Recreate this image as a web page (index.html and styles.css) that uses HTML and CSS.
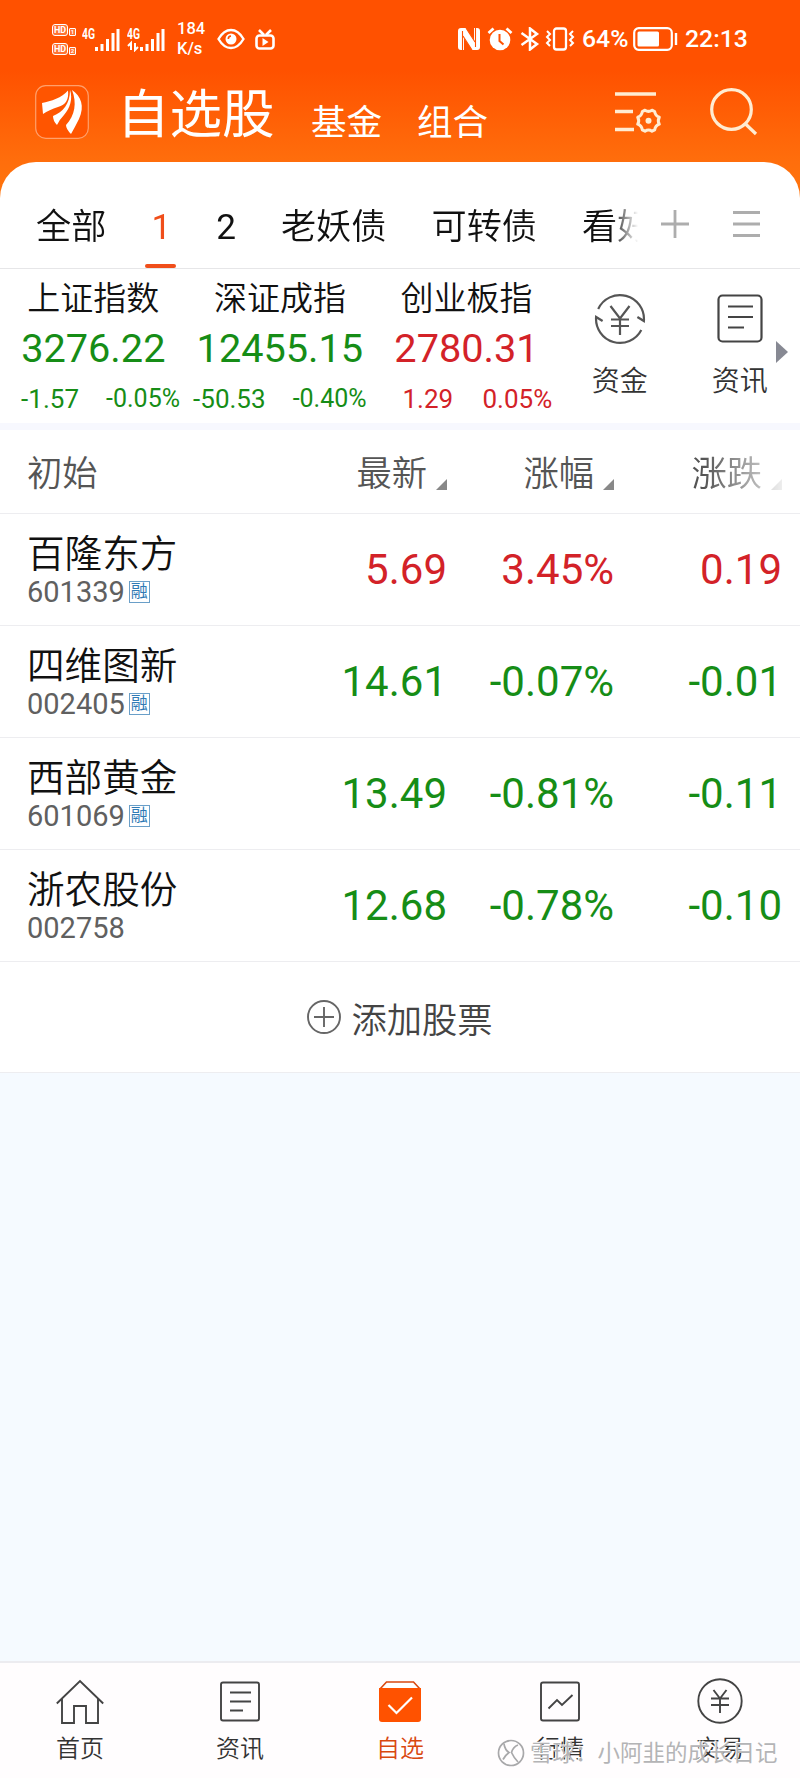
FILE: index.html
```html
<!DOCTYPE html>
<html lang="zh-CN">
<head>
    <meta charset="UTF-8">
    <meta name="viewport" content="width=device-width, initial-scale=1.0">
    <title>自选股</title>
    <link rel="stylesheet" href="styles.css">
</head>
<body>
    <div class="app">
        <header class="header">
            <div class="status-bar">
                <div class="hd-group">
                    <div class="hd"><span class="hd-label">HD</span><span class="hd-num">1</span></div>
                    <div class="hd"><span class="hd-label">HD</span><span class="hd-num">2</span></div>
                </div>
                <svg class="signal" width="38" height="26" viewBox="0 0 38 26">
                    <text x="0" y="13" class="net" textLength="13" lengthAdjust="spacingAndGlyphs">4G</text>
                    <path d="M14.5 25v-4M20 25v-7M25.5 25v-12M31 25v-18M36 25v-22" stroke="#fff" stroke-width="3"/>
                </svg>
                <svg class="signal signal-2" width="38" height="26" viewBox="0 0 38 26">
                    <text x="0" y="13" class="net" textLength="13" lengthAdjust="spacingAndGlyphs">4G</text>
                    <path d="M14.5 25v-4M20 25v-7M25.5 25v-12M31 25v-18M36 25v-22" stroke="#fff" stroke-width="3"/>
                    <path d="M4 24v-7l-3 3M8 17v7l3-3" fill="none" stroke="#fff" stroke-width="2"/>
                </svg>
                <div class="speed"><span>184</span><span>K/s</span></div>
                <svg class="eye" width="28" height="22" viewBox="0 0 28 22" fill="none" stroke="#fff" stroke-width="2.4">
                    <path d="M1.5 11C5 5 9 2 14 2s9 3 12.5 9C23 17 19 20 14 20S5 17 1.5 11z"/>
                    <circle cx="14" cy="11" r="5.5" fill="#fff" stroke="none"/>
                    <path d="M11.3 11a3 3 0 0 1 2.7-3" stroke="#ff5100" stroke-width="1.6"/>
                </svg>
                <svg class="tv" width="20" height="21" viewBox="0 0 20 21" fill="none" stroke="#fff" stroke-width="2.6">
                    <rect x="1.5" y="6.5" width="17" height="13" rx="3"/>
                    <path d="M4 1l5 5M16 1l-5 5"/>
                    <path d="M7.5 9l6 4-6 4z" fill="#fff" stroke="none"/>
                </svg>
                <svg class="nfc" width="22" height="22" viewBox="0 0 22 22">
                    <path d="M3 0h5l8 12V0h3q3 0 3 3v16q0 3-3 3h-5L6 10v12H3q-3 0-3-3V3q0-3 3-3z" fill="#fff"/>
                    <path d="M4.5 22V3M17.5 0v19M8 0l9 14M5 8l9 14" fill="none" stroke="#ff5100" stroke-width="1.1"/>
                </svg>
                <svg class="alarm" width="26" height="24" viewBox="0 0 26 24">
                    <circle cx="13" cy="13" r="10.3" fill="#fff"/>
                    <path d="M12.5 7v7l4 3.5" fill="none" stroke="#ff5100" stroke-width="2"/>
                    <path d="M1.5 6l5-4.5M24.5 6l-5-4.5" stroke="#fff" stroke-width="2.8"/>
                </svg>
                <svg class="bt" width="20" height="24" viewBox="0 0 20 24">
                    <path d="M1.5 6L17 17l-7 5.5v-21L17 7 1.5 18" fill="none" stroke="#fff" stroke-width="2.5"/>
                </svg>
                <svg class="vibrate" width="30" height="24" viewBox="0 0 30 24" fill="none" stroke="#fff" stroke-width="2.3">
                    <rect x="9" y="1.5" width="12" height="21" rx="2.5"/>
                    <path d="M2 4l3 3-3 3 3 3-3 3 3 3M28 4l-3 3 3 3-3 3 3 3-3 3" stroke-width="2"/>
                </svg>
                <span class="status-text battery-text">64%</span>
                <svg class="battery" width="46" height="24" viewBox="0 0 46 24">
                    <rect x="1.2" y="1.2" width="37.6" height="21.6" rx="4.5" fill="none" stroke="#fff" stroke-width="2.2"/>
                    <rect x="4.5" y="4.5" width="21.5" height="15" rx="1.5" fill="#fff"/>
                    <path d="M43 6v12" stroke="#fff" stroke-width="2.4"/>
                </svg>
                <span class="status-text">22:13</span>
            </div>
            <div class="title-bar">
                <svg class="logo" width="54" height="54" viewBox="0 0 54 54">
                    <rect x=".7" y=".7" width="52.6" height="52.6" rx="10" fill="#ff5500" stroke="#ffa06c" stroke-width="1.2"/>
                    <g fill="#fff">
                        <path d="M7 18C16 16 27 13 33 5.5C34 14 31 20 23 22C17 24 12 26 8 29z"/>
                        <path d="M35 5C38 14 35 23 29 30Q25 34 22 40Q18 36 18 31C28 27 35 19 35 5z"/>
                        <path d="M37 5C46 11 50 21 44 34Q40 42 36 49Q31 44 31 40C40 30 42 18 37 5z"/>
                    </g>
                </svg>
                <h1 class="title">自选股</h1>
                <span class="title-link">基金</span>
                <span class="title-link">组合</span>
                <svg class="list-settings" width="48" height="44" viewBox="0 0 48 44" fill="none" stroke="#ffecd2" stroke-width="3.4">
                    <path d="M0 4h41M0 21.5h18M0 39.500h19"/>
                    <path d="M30 20.200q3.500 2.400 7 0l2.700 1.400q.6 4.200 4.600 5.600-2 3.500 0 7-4 1.400-4.600 5.600L37 41.200q-3.500-2.400-7 0l-2.700-1.400q-.6-4.200-4.600-5.600 2-3.500 0-7 4-1.400 4.600-5.600z" stroke-width="3" stroke-linejoin="round"/>
                    <circle cx="33.5" cy="30.7" r="3" fill="#ffecd2" stroke="none"/>
                </svg>
                <svg class="search" width="48" height="48" viewBox="0 0 48 48" fill="none" stroke="#ffecd2" stroke-width="3.2">
                    <circle cx="21.5" cy="21.5" r="19.8"/>
                    <path d="M35 35.5l11 10.5"/>
                </svg>
            </div>
        </header>

        <main class="sheet">
            <nav class="tabs">
                <div class="tab-list">
                    <span class="tab">全部</span>
                    <span class="tab tab-num active">1</span>
                    <span class="tab tab-num">2</span>
                    <span class="tab">老妖债</span>
                    <span class="tab">可转债</span>
                    <span class="tab">看好</span>
                </div>
                <svg class="tab-add" width="28" height="28" viewBox="0 0 28 28">
                    <path d="M14 0v28M0 14h28" stroke="#adadad" stroke-width="2.8"/>
                </svg>
                <svg class="tab-menu" width="27" height="28" viewBox="0 0 27 28">
                    <path d="M0 2.5h27M0 14h27M0 25.5h27" stroke="#adadad" stroke-width="2.8"/>
                </svg>
            </nav>

            <section class="indices">
                <div class="index down">
                    <div class="index-name">上证指数</div>
                    <div class="index-value">3276.22</div>
                    <div class="index-change"><span>-1.57</span><span class="pct">-0.05%</span></div>
                </div>
                <div class="index down">
                    <div class="index-name">深证成指</div>
                    <div class="index-value">12455.15</div>
                    <div class="index-change"><span>-50.53</span><span class="pct">-0.40%</span></div>
                </div>
                <div class="index up">
                    <div class="index-name">创业板指</div>
                    <div class="index-value">2780.31</div>
                    <div class="index-change"><span>1.29</span><span class="pct">0.05%</span></div>
                </div>
                <div class="shortcut">
                    <svg width="52" height="52" viewBox="0 0 52 52" fill="none" stroke="#555" stroke-width="2.2">
                        <path d="M4.2 16A24 24 0 0 1 49.9 28l-6.500-4M47.300 37A24 24 0 0 1 2.100 24l6.500 4"/>
                        <path d="M16.5 13L26 25.5 35.5 13M26 25.5V42M17 26.5h18M17 33h18"/>
                    </svg>
                    <span>资金</span>
                </div>
                <div class="shortcut">
                    <svg width="46" height="52" viewBox="0 0 46 52" fill="none" stroke="#444" stroke-width="2.2">
                        <rect x="1.5" y="2.500" width="43" height="46" rx="4"/>
                        <path d="M11 13.500h25M11 24h25M11 34.500h16"/>
                    </svg>
                    <span>资讯</span>
                </div>
                <span class="more-arrow"></span>
            </section>

            <section class="stocks">
                <div class="row row-head">
                    <span>初始</span>
                    <span class="sort">最新</span>
                    <span class="sort">涨幅</span>
                    <span class="sort faded">涨跌</span>
                </div>
                <div class="row up">
                    <div class="stock">
                        <div class="stock-name">百隆东方</div>
                        <div class="stock-code">601339<span class="badge">融</span></div>
                    </div>
                    <span class="num">5.69</span><span class="num">3.45%</span><span class="num">0.19</span>
                </div>
                <div class="row down">
                    <div class="stock">
                        <div class="stock-name">四维图新</div>
                        <div class="stock-code">002405<span class="badge">融</span></div>
                    </div>
                    <span class="num">14.61</span><span class="num">-0.07%</span><span class="num">-0.01</span>
                </div>
                <div class="row down">
                    <div class="stock">
                        <div class="stock-name">西部黄金</div>
                        <div class="stock-code">601069<span class="badge">融</span></div>
                    </div>
                    <span class="num">13.49</span><span class="num">-0.81%</span><span class="num">-0.11</span>
                </div>
                <div class="row down">
                    <div class="stock">
                        <div class="stock-name">浙农股份</div>
                        <div class="stock-code">002758</div>
                    </div>
                    <span class="num">12.68</span><span class="num">-0.78%</span><span class="num">-0.10</span>
                </div>
                <div class="add-stock">
                    <svg width="34" height="34" viewBox="0 0 34 34" fill="none" stroke="#666" stroke-width="1.9">
                        <circle cx="17" cy="17" r="16"/>
                        <path d="M17 7v20M7 17h20"/>
                    </svg>
                    <span>添加股票</span>
                </div>
            </section>
        </main>

        <footer class="nav">
            <a class="nav-item">
                <svg width="48" height="48" viewBox="0 0 48 48" fill="none" stroke="#444" stroke-width="1.9">
                    <path d="M.8 25.5L24 3l23.2 22.5M6 21v24h12V28h12v17h12V21"/>
                </svg>
                <span>首页</span>
            </a>
            <a class="nav-item">
                <svg width="48" height="48" viewBox="0 0 48 48" fill="none" stroke="#444" stroke-width="1.9">
                    <rect x="5" y="4.5" width="38" height="38" rx="2"/>
                    <path d="M14 14.5h21M14 23.5h21M14 32.5h13"/>
                </svg>
                <span>资讯</span>
            </a>
            <a class="nav-item active">
                <svg width="48" height="48" viewBox="0 0 48 48">
                    <path d="M4 11l6.5-7h27l6.5 7" fill="#fff" stroke="#d9480f" stroke-width="1.6"/>
                    <path d="M3 10h42v31q0 3-3 3H6q-3 0-3-3z" fill="#ff5200"/>
                    <path d="M12.5 27l8 8L36 19.5" fill="none" stroke="#fff" stroke-width="2.2"/>
                </svg>
                <span>自选</span>
            </a>
            <a class="nav-item">
                <svg width="48" height="48" viewBox="0 0 48 48" fill="none" stroke="#444" stroke-width="1.9">
                    <rect x="5" y="4.5" width="38" height="38" rx="2"/>
                    <path d="M12.5 30.5l8.5-8.5 5 5L36.500 17"/>
                </svg>
                <span>行情</span>
            </a>
            <a class="nav-item">
                <svg width="48" height="48" viewBox="0 0 48 48" fill="none" stroke="#444" stroke-width="1.9">
                    <circle cx="24" cy="23" r="21.7"/>
                    <path d="M17.5 12l6.5 8.5 6.5-8.5M24 20.5V35M15 20.5h18M15 27h18"/>
                </svg>
                <span>交易</span>
            </a>
            <div class="watermark">
                <svg width="28" height="28" viewBox="0 0 28 28" fill="none" stroke="#a8a8aa" stroke-width="1.7">
                    <circle cx="14" cy="14" r="12.5"/>
                    <path d="M7 5q1 6 5 8.500-4 3-6 7M21 6q-5 2-6.500 7.500Q17 19 21 23"/>
                </svg>
                <span>雪球：小阿韭的成长日记</span>
            </div>
        </footer>
    </div>
</body>
</html>
```

FILE: styles.css
```css
* {
    box-sizing: border-box;
}

body {
    margin: 0;
    font-family: Roboto, "Noto Sans CJK SC", sans-serif;
    font-weight: 350;
    color: #111;
}

svg {
    display: block;
    flex: none;
}

.app {
    width: 800px;
    height: 1778px;
    display: flex;
    flex-direction: column;
    background: #f5faff;
    overflow: hidden;
}

/* header */
.header {
    height: 202px;
    flex: none;
    background: linear-gradient(#ff5100 0, #ff5100 70px, #ff6e0c 162px, #ff760c 202px);
    color: #fff;
}

.status-bar {
    height: 78px;
    display: flex;
    align-items: center;
    padding-left: 52px;
    font-weight: 500;
}

.hd-group {
    display: flex;
    flex-direction: column;
    gap: 7px;
    width: 30px;
}

.hd {
    display: flex;
    align-items: flex-end;
    gap: 1px;
    height: 12px;
}

.hd-label {
    width: 16px;
    height: 12px;
    border: 1px solid #fff;
    border-radius: 3px;
    background: rgba(255, 255, 255, .2);
    font-size: 9px;
    font-weight: 700;
    line-height: 10px;
    text-align: center;
}

.hd-num {
    width: 7px;
    height: 8px;
    border: 1px solid #fff;
    border-radius: 1px;
    background: rgba(255, 255, 255, .2);
    font-size: 6px;
    font-weight: 700;
    line-height: 6px;
    text-align: center;
}

.net {
    font-size: 14px;
    font-weight: 700;
    fill: #fff;
}

.signal-2 {
    margin-left: 7px;
}

.speed {
    display: flex;
    flex-direction: column;
    width: 28px;
    margin-left: 12px;
    font-size: 16.5px;
    line-height: 20px;
}

.eye {
    margin-left: 12px;
}

.tv {
    margin-left: 10px;
}

.nfc {
    margin-left: 183px;
}

.alarm {
    margin-left: 7px;
}

.bt {
    margin-left: 7px;
}

.vibrate {
    margin-left: 5px;
}

.status-text {
    font-size: 24.8px;
    line-height: 28px;
}

.battery-text {
    margin-left: 7px;
    width: 51px;
}

.battery {
    margin-right: 6px;
}

.title-bar {
    display: flex;
    align-items: center;
    padding-left: 35px;
    height: 68px;
}

.title {
    margin: 5px 0 0 28px;
    width: 159px;
    font-size: 52.5px;
    font-weight: 400;
    line-height: 60px;
}

.title-link {
    margin: 22px 0 0 35px;
    width: 71px;
    font-size: 35.5px;
    line-height: 40px;
    font-weight: 400;
}

.list-settings {
    margin-left: 127px;
}

.search {
    margin-left: 47px;
}

/* white sheet */
.sheet {
    margin-top: -40px;
}

.tabs {
    display: flex;
    align-items: center;
    height: 107px;
    padding: 0 40px 0 36px;
    background: #fff;
    border-radius: 36px 36px 0 0;
    border-bottom: 1px solid #e6e6e8;
}

.tab-list {
    display: flex;
    gap: 45px;
    width: 602px;
    height: 106px;
    overflow: hidden;
    -webkit-mask-image: linear-gradient(90deg, #000 575px, transparent 602px);
    mask-image: linear-gradient(90deg, #000 575px, transparent 602px);
}

.tab {
    flex: none;
    height: 106px;
    font-size: 35.2px;
    line-height: 130px;
}

.tab-num {
    font-weight: 400;
}

.tab.active {
    position: relative;
    color: #f04e1a;
}

.tab.active::after {
    content: "";
    position: absolute;
    left: -6px;
    bottom: 0;
    width: 31px;
    height: 4px;
    border-radius: 2px;
    background: #f04e1a;
}

.tab-add {
    margin: 18px 0 0 23px;
}

.tab-menu {
    margin: 18px 0 0 44px;
}

/* indices */
.indices {
    display: flex;
    height: 154px;
    background: #fff;
}

.index {
    width: 186.6px;
    text-align: center;
}

.index-name {
    margin-top: 10px;
    font-size: 33px;
    line-height: 40px;
    color: #111;
}

.index-value {
    margin-top: 6px;
    font-size: 39.7px;
    line-height: 48px;
    font-weight: 400;
}

.index-change {
    display: grid;
    grid-template-columns: 79px 101px;
    margin-top: 11px;
    font-size: 26px;
    line-height: 30px;
    font-weight: 400;
    text-align: right;
    white-space: nowrap;
}

.index.up .index-change {
    grid-template-columns: 80px 99px;
}

.pct {
    font-size: 25px;
}

.index.up .pct {
    font-size: 26px;
}

.up {
    color: #d32228;
}

.down {
    color: #168d16;
}

.shortcut {
    display: flex;
    flex-direction: column;
    align-items: center;
    width: 120px;
    padding-top: 24px;
    font-size: 28px;
    line-height: 36px;
    color: #333;
    gap: 19px;
}

.more-arrow {
    align-self: flex-start;
    margin: 72px 0 0 -24px;
    border-left: 12px solid #878993;
    border-top: 11px solid transparent;
    border-bottom: 11px solid transparent;
}

/* stock list */
.stocks {
    border-top: 7px solid #f7f8fe;
    background: #fff;
}

.row {
    display: grid;
    grid-template-columns: 231px 189px 167px 168px;
    align-items: center;
    height: 111.9px;
    padding-left: 27px;
    border-bottom: 1px solid #ededf0;
}

.row-head {
    height: 84px;
    padding-top: 4px;
    font-size: 35.3px;
    line-height: 40px;
    color: #555;
}

.sort {
    display: flex;
    justify-content: flex-end;
    align-items: flex-end;
    gap: 9px;
}

.sort::after {
    content: "";
    margin-bottom: 4px;
    border-left: 11px solid transparent;
    border-bottom: 11px solid #888;
}

.faded {
    -webkit-mask-image: linear-gradient(90deg, #000 90px, rgba(0, 0, 0, .15) 100%);
    mask-image: linear-gradient(90deg, #000 90px, rgba(0, 0, 0, .15) 100%);
}

.stock {
    padding-top: 1px;
}

.stock-name {
    font-size: 37.6px;
    line-height: 44px;
    color: #111;
}

.stock-code {
    display: flex;
    align-items: center;
    font-size: 29px;
    line-height: 32px;
    font-weight: 400;
    color: #606060;
}

.badge {
    width: 21px;
    height: 22px;
    margin: 1px 0 0 4px;
    border: 1px solid #6a9fc8;
    font-size: 17px;
    line-height: 19px;
    text-align: center;
    color: #2f7ab5;
}

.num {
    font-size: 42px;
    line-height: 48px;
    padding-top: 1px;
    font-weight: 400;
    text-align: right;
}

.add-stock {
    display: flex;
    align-items: center;
    justify-content: center;
    gap: 10px;
    height: 111.9px;
    border-bottom: 1px solid #ededf0;
    font-size: 35.3px;
    color: #444;
}

/* bottom nav */
.nav {
    position: relative;
    display: flex;
    height: 117px;
    margin-top: auto;
    border-top: 2px solid #ececf0;
    background: #fffdfe;
}

.nav-item {
    display: flex;
    flex-direction: column;
    align-items: center;
    width: 160px;
    padding-top: 15px;
    gap: 8px;
    font-size: 24px;
    line-height: 30px;
    color: #333;
}

.nav-item.active {
    color: #d9480f;
}

.watermark {
    position: absolute;
    left: 497px;
    top: 76px;
    display: flex;
    align-items: center;
    gap: 5px;
    font-size: 22.5px;
    line-height: 28px;
    font-weight: 400;
    white-space: nowrap;
    color: #b4b4b6;
    text-shadow: -1px -1px 0 #fff;
}
```
